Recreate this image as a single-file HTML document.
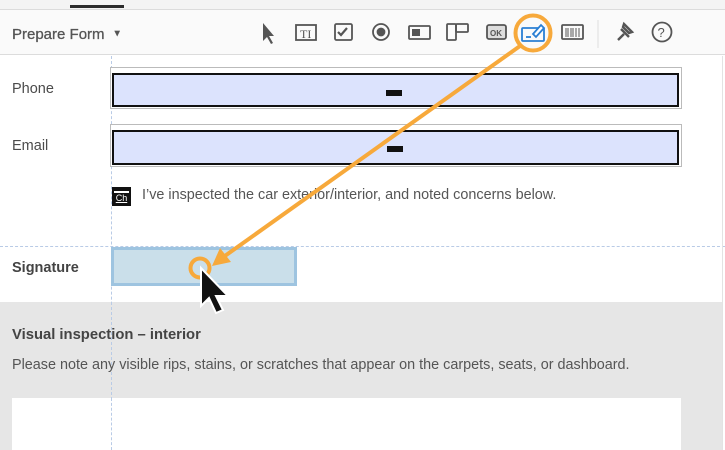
<!DOCTYPE html>
<html><head><meta charset="utf-8">
<style>
*{margin:0;padding:0;box-sizing:border-box}
body{width:725px;height:450px;overflow:hidden;background:#fff;font-family:"Liberation Sans",Arial,sans-serif;position:relative;color:#4b4b4b}
.abs{position:absolute}
</style></head><body>
<div class="abs" style="left:0;top:0;width:725px;height:10px;background:#f4f4f4;border-bottom:1px solid #dcdcdc"></div>
<div class="abs" style="left:70px;top:5px;width:54px;height:3px;background:#2c2c2c"></div>
<div class="abs" style="left:0;top:10px;width:725px;height:45px;background:#fafafa;border-bottom:1px solid #dcdcdc"></div>
<div class="abs" style="left:12px;top:26px;font-size:15px;color:#555;-webkit-text-stroke:0.3px #555">Prepare Form <span style="font-size:9px;position:relative;top:-3px;margin-left:4px">▼</span></div>
<svg class="abs" style="left:0;top:10px" width="725" height="45">
 <g fill="none" stroke="#555" stroke-width="1.8">
  <path d="M263 13 L263 31 L267 27 L271 34 L273 33 L269 26 L274 26 Z" fill="#555" stroke="none"/>
  <rect x="296" y="15" width="20" height="15"/><text x="300" y="28" font-size="12" fill="#555" stroke="none" font-family="Liberation Serif">TI</text>
  <rect x="335" y="14" width="17" height="16" rx="1.5"/><path d="M338 22 l3 3 l6 -7" stroke-width="2.2"/>
  <circle cx="381" cy="22" r="8"/><circle cx="381" cy="22" r="3.5" fill="#555"/>
  <rect x="409" y="16" width="21" height="13" rx="1"/><rect x="412" y="19" width="8" height="7" fill="#555" stroke="none"/>
  <rect x="447" y="14" width="9" height="16" rx="1"/><rect x="456" y="14" width="12" height="8" rx="1"/>
  <rect x="487" y="15" width="19" height="14" rx="2" fill="#ddd"/><text x="490" y="26" font-size="8" fill="#555" stroke="none" font-weight="bold">OK</text>
  <g stroke="#2a7fd4"><rect x="522" y="18" width="22" height="13" rx="1"/><path d="M526 27 h5"/><path d="M533 24 l8 -9 l3 3 l-8 9 Z" fill="#fff"/></g>
  <rect x="562" y="15" width="21" height="14" rx="1"/><path d="M566 18v9M568 18v9M571 18v9M573 18v9M576 18v9M579 18v9" stroke-width="1"/>
  <path d="M598 10 v28" stroke="#ddd" stroke-width="1"/>
  <path d="M618 30 l6 -6 M621 19 l8 8 M624 14 l8 8 l-3 1 l-6 -6 Z" stroke="#555" stroke-width="2.4"/>
  <circle cx="662" cy="22" r="9.5"/><text x="657.5" y="27" font-size="13" fill="#555" stroke="none">?</text>
 </g>
</svg>
<div class="abs" style="left:111px;top:56px;height:394px;border-left:1px dashed #b9cbe6"></div>
<div class="abs" style="left:0;top:246px;width:725px;border-top:1px dashed #b9cbe6"></div>
<div class="abs" style="left:722px;top:56px;height:394px;border-left:1px solid #e3e3e3"></div>
<div class="abs" style="left:12px;top:81px;font-size:14.5px">Phone</div>
<div class="abs" style="left:110px;top:67px;width:572px;height:42px;border:1px solid #bbb;background:#fff"></div>
<div class="abs" style="left:112px;top:73px;width:567px;height:34px;border:2px solid #111;background:#dce3fd"></div>
<div class="abs" style="left:386px;top:90px;width:16px;height:6px;background:#111"></div>
<div class="abs" style="left:12px;top:138px;font-size:14.5px">Email</div>
<div class="abs" style="left:110px;top:124px;width:572px;height:43px;border:1px solid #bbb;background:#fff"></div>
<div class="abs" style="left:112px;top:130px;width:567px;height:35px;border:2px solid #111;background:#dce3fd"></div>
<div class="abs" style="left:387px;top:146px;width:16px;height:6px;background:#111"></div>
<div class="abs" style="left:112px;top:187px;width:19px;height:19px;background:#111;border:2px solid #111"><div style="background:#fff;height:2px;margin-top:2px"></div><div style="color:#fff;font-size:9px;text-align:center;text-decoration:underline">Ch</div></div>
<div class="abs" style="left:142px;top:187px;font-size:14.4px;color:#555">I’ve inspected the car exterior/interior, and noted concerns below.</div>
<div class="abs" style="left:12px;top:260px;font-size:14.5px;font-weight:bold;color:#444">Signature</div>
<div class="abs" style="left:111px;top:247px;width:186px;height:39px;background:#cadfea;border:3px solid #9ec4e0"></div>
<div class="abs" style="left:0;top:302px;width:722px;height:148px;background:#e6e6e6"></div>
<div class="abs" style="left:111px;top:302px;height:148px;border-left:1px dashed #b9cbe6"></div>
<div class="abs" style="left:12px;top:327px;font-size:14.8px;font-weight:bold;color:#444">Visual inspection – interior</div>
<div class="abs" style="left:12px;top:357px;font-size:14.4px;color:#555">Please note any visible rips, stains, or scratches that appear on the carpets, seats, or dashboard.</div>
<div class="abs" style="left:12px;top:398px;width:669px;height:52px;background:#fff"></div>
<div class="abs" style="left:111px;top:398px;height:52px;border-left:1px dashed #b9cbe6"></div>
<svg class="abs" style="left:0;top:0" width="725" height="450">
 <circle cx="533" cy="33" r="17.5" fill="none" stroke="#f7a93b" stroke-width="4"/>
 <path d="M520 46 L222 258" stroke="#f7a93b" stroke-width="4"/>
 <path d="M212 266 L220 248 L231 262 Z" fill="#f7a93b"/>
 <circle cx="200" cy="268" r="9.5" fill="none" stroke="#f7a93b" stroke-width="4"/>
 <path d="M201 268 L201 306 L209 298 L216 313 L223 310 L216 296 L228 296 Z" fill="#111" stroke="#fff" stroke-width="2"/>
</svg>
</body></html>
